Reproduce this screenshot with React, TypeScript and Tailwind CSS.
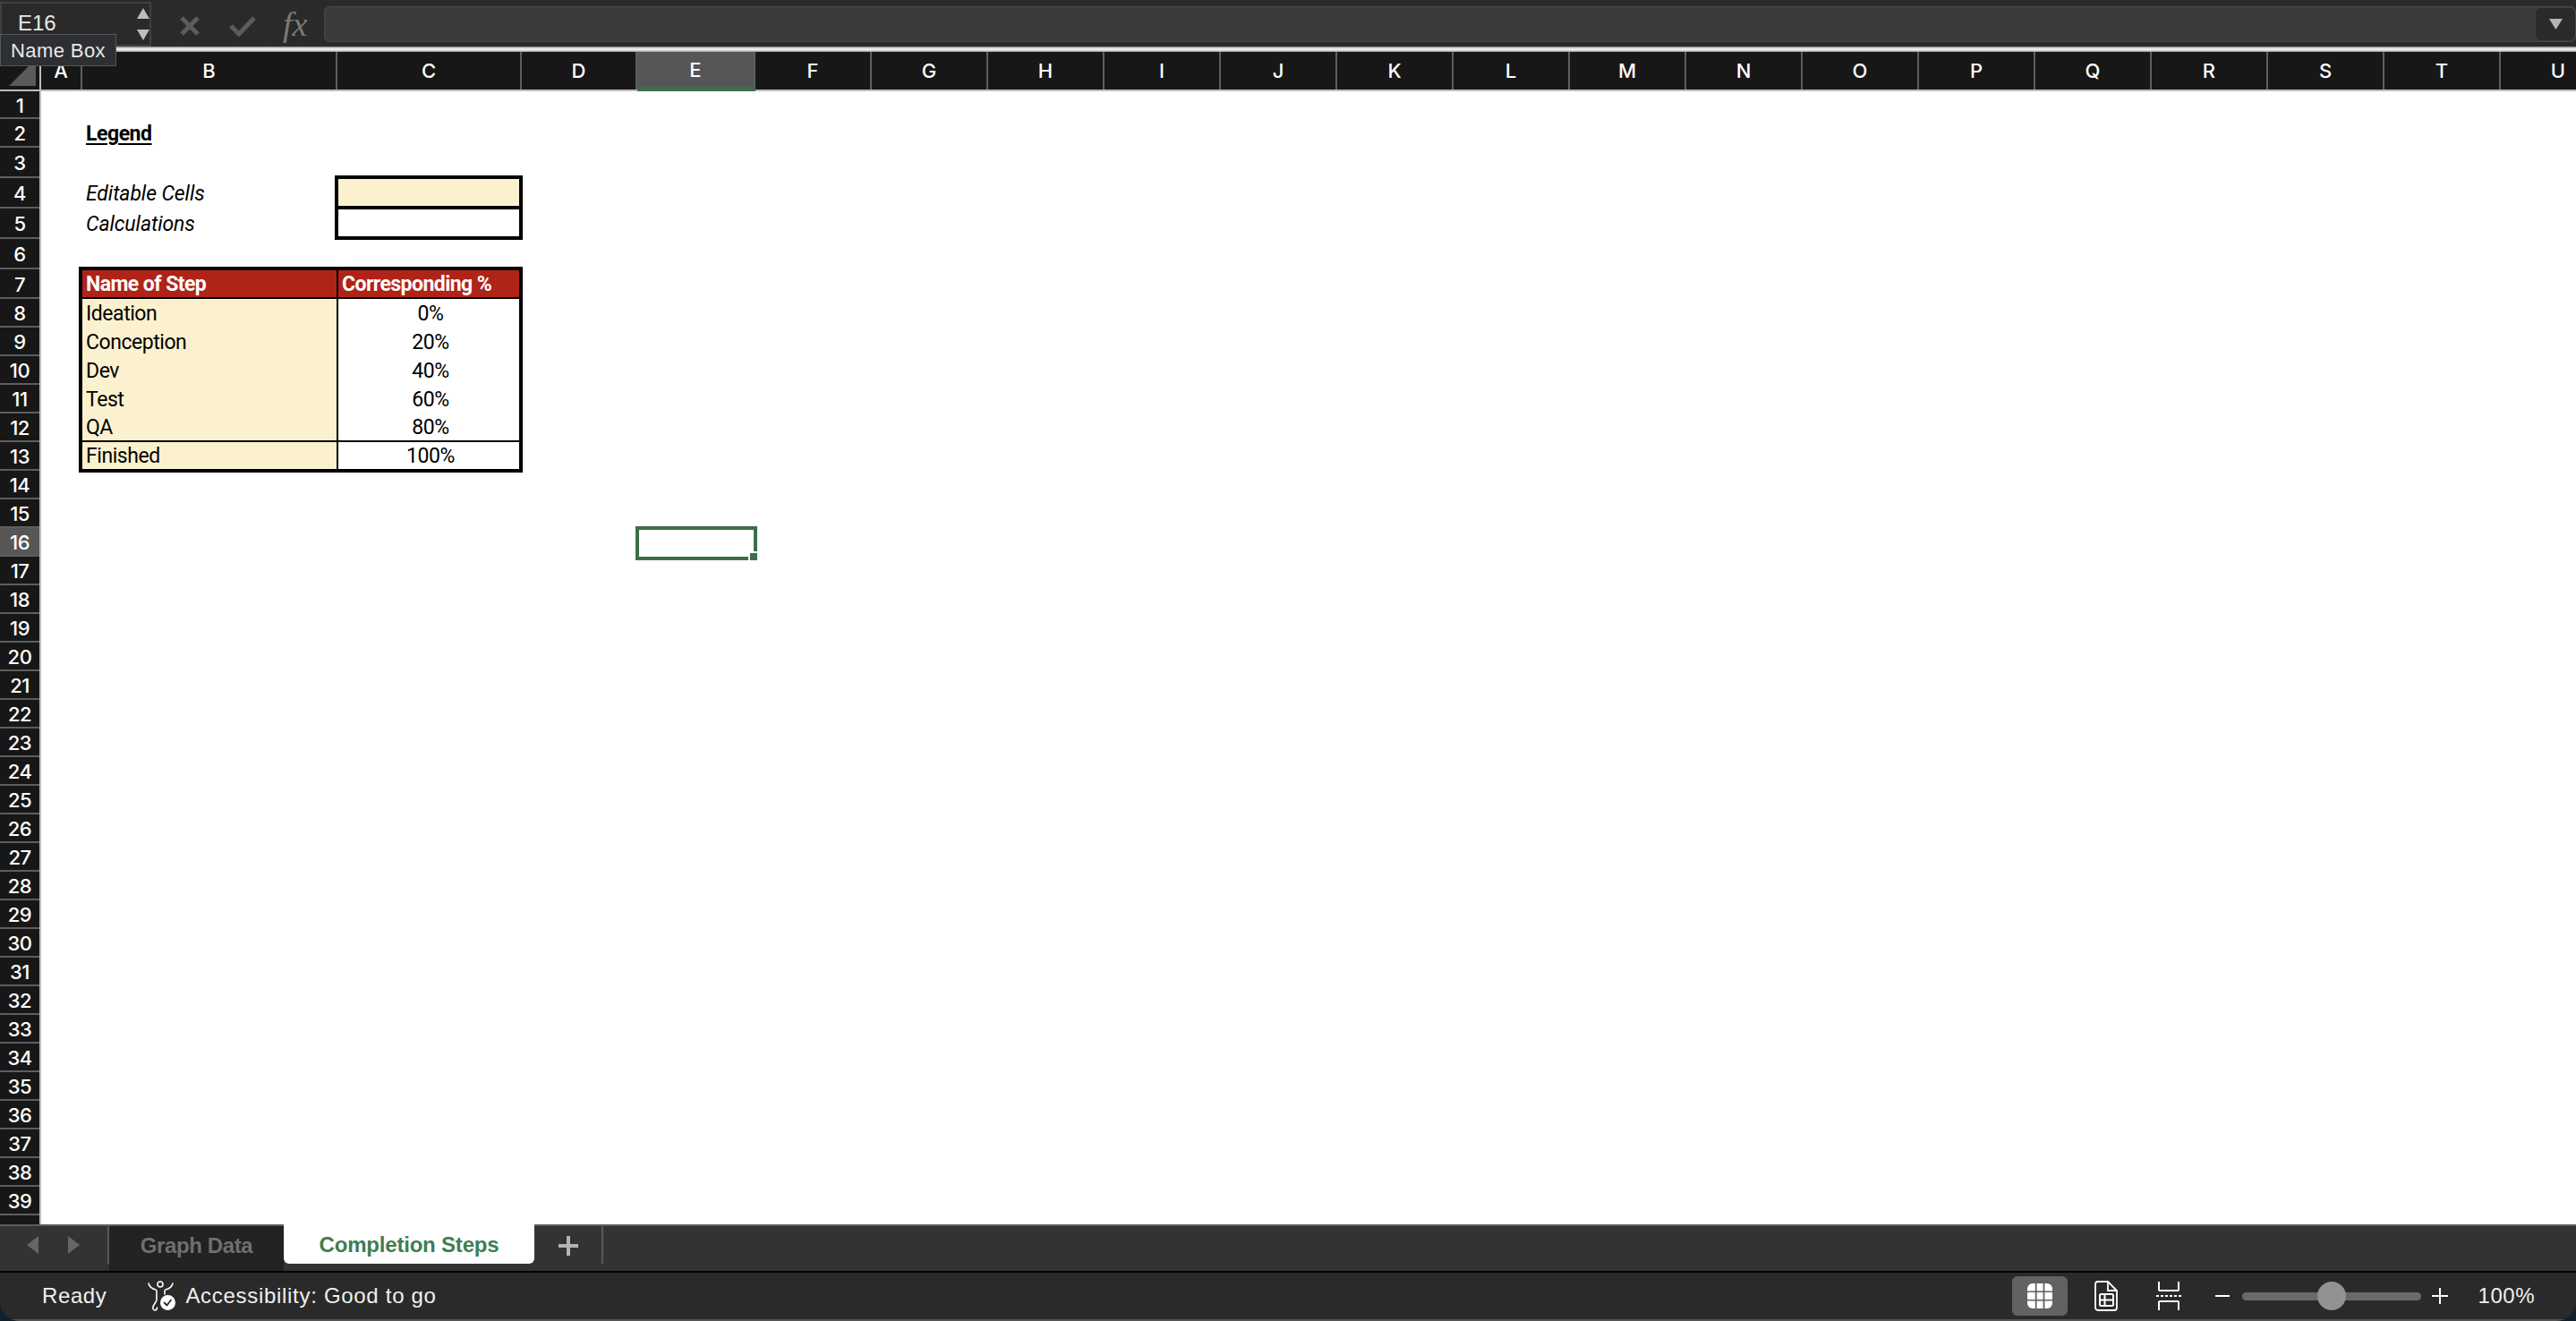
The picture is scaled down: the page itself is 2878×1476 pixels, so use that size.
const columns = [
  { label: "A", box: "w-[46px]" },
  { label: "B", box: "w-[285px]" },
  { label: "C", box: "w-[206px]" },
  { label: "D", box: "w-[129px]" },
  { label: "E", box: "w-[132px] h-[44px] pt-[2px] bg-[#565656] border-b-[5px] border-b-[#3a7048]" },
  { label: "F", box: "w-[130px]" },
  { label: "G", box: "w-[130px]" },
  { label: "H", box: "w-[130px]" },
  { label: "I", box: "w-[130px]" },
  { label: "J", box: "w-[130px]" },
  { label: "K", box: "w-[130px]" },
  { label: "L", box: "w-[130px]" },
  { label: "M", box: "w-[130px]" },
  { label: "N", box: "w-[130px]" },
  { label: "O", box: "w-[130px]" },
  { label: "P", box: "w-[130px]" },
  { label: "Q", box: "w-[130px]" },
  { label: "R", box: "w-[130px]" },
  { label: "S", box: "w-[130px]" },
  { label: "T", box: "w-[130px]" },
  { label: "U", box: "w-[130px]" },
]

const steps = [
  { name: "Ideation", pct: "0%" },
  { name: "Conception", pct: "20%" },
  { name: "Dev", pct: "40%" },
  { name: "Test", pct: "60%" },
  { name: "QA", pct: "80%" },
]

const rowHeight = (n: number) => {
  if (n === 1) return "h-[31px]"
  if (n === 2) return "h-[32px]"
  if (n >= 3 && n <= 6) return "h-[34px]"
  if (n === 7) return "h-[33px]"
  return "h-[32px]"
}

const rows = Array.from({ length: 40 }, (_, i) => i + 1)

const cellFont = "font-['Roboto',sans-serif] text-[23px] tracking-[-0.45px] text-black"
const italicFont = "font-['Roboto',sans-serif] text-[23px] italic tracking-[-0.1px] text-black"

const AccessibilityIcon = () => (
  <svg className="block" width="32" height="34" viewBox="0 0 32 34" fill="none">
    <circle cx="14" cy="4" r="3" stroke="white" strokeWidth="1.6" />
    <path d="M1 3c1 4 4 6 8 7 1 .3 1 1 1 2v9c0 3-3 5-4 8-.6 2 .4 4 2 4s2.500-1.500 2.500-3M28 3c-1 4-4 6-8 7-1 .3-1 1-1 2v3" stroke="white" strokeWidth="1.6" strokeLinecap="round" />
    <circle cx="22.500" cy="24.500" r="8.500" fill="white" />
    <path d="M18.500 24.500l3 3 4.500-6" stroke="#2a2a2a" strokeWidth="1.800" strokeLinecap="round" strokeLinejoin="round" />
  </svg>
)

const GridIcon = () => (
  <svg width="28" height="28" viewBox="0 0 28 28">
    <path d="M6 0h2.8v8.400H0V6a6 6 0 0 1 6-6Z" fill="white" />
    <rect x="10.600" y="0" width="7" height="8.400" fill="white" />
    <path d="M19.400 0H22a6 6 0 0 1 6 6v2.400h-8.600Z" fill="white" />
    <rect x="0" y="10" width="8.800" height="8" fill="white" />
    <rect x="10.600" y="10" width="7" height="8" fill="white" />
    <rect x="19.400" y="10" width="8.600" height="8" fill="white" />
    <path d="M0 19.600h8.800V28H6a6 6 0 0 1-6-6Z" fill="white" />
    <rect x="10.600" y="19.600" width="7" height="8.400" fill="white" />
    <path d="M19.400 19.600H28V22a6 6 0 0 1-6 6h-2.600Z" fill="white" />
  </svg>
)

const PageIcon = () => (
  <svg width="26" height="34" viewBox="0 0 26 34" fill="none" stroke="white" strokeWidth="1.800">
    <path d="M4 1h11l10 10v19a3 3 0 0 1-3 3H4a3 3 0 0 1-3-3V4a3 3 0 0 1 3-3Z" />
    <path d="M15 1v10h10" />
    <rect x="6" y="15" width="15" height="13" rx="1.500" strokeWidth="2" />
    <path d="M6 21.500h15M11.500 15v13" strokeWidth="2" />
  </svg>
)

const PageBreakIcon = () => (
  <svg width="28" height="34" viewBox="0 0 28 34" fill="none" stroke="white" strokeWidth="2">
    <path d="M3 1v9a1 1 0 0 0 1 1h20a1 1 0 0 0 1-1V1" />
    <path d="M0 17h28" strokeDasharray="3 2" />
    <path d="M3 33v-9a1 1 0 0 1 1-1h20a1 1 0 0 1 1 1v9" />
  </svg>
)

const App = () => {
  return (
    <div className="w-[2878px] h-[1476px] overflow-hidden bg-[#10202e]">
      <div className="w-full h-full flex flex-col rounded-b-[22px] overflow-hidden bg-[#2a2a2a]">
        {/* formula bar */}
        <div className="h-[52px] shrink-0 flex items-center bg-[#2a2a2a] relative">
          <div className="w-[169px] h-[50px] mt-[2px] border-2 border-[#404040] flex items-center justify-between pl-[18px] shrink-0">
            <span className="font-['Liberation_Sans',sans-serif] text-[24px] text-[#e8e8e8] -mt-[2px]">E16</span>
            <div className="flex flex-col gap-[12px]">
              <svg width="14" height="12" viewBox="0 0 14 12"><path d="M7 0l7 12H0Z" fill="#bdbdbd" /></svg>
              <svg width="14" height="12" viewBox="0 0 14 12"><path d="M0 0h14L7 12Z" fill="#bdbdbd" /></svg>
            </div>
          </div>
          <svg className="ml-[32px] mt-[6px] shrink-0" width="22" height="22" viewBox="0 0 22 22"><path d="M2 2l18 18M20 2L2 20" stroke="#5c5c5c" strokeWidth="5" /></svg>
          <svg className="ml-[33px] mt-[6px] shrink-0" width="30" height="24" viewBox="0 0 30 24" fill="none"><path d="M2 12l9 9L28 3" stroke="#5c5c5c" strokeWidth="5" /></svg>
          <span className="ml-[30px] w-[46px] shrink-0 mt-[2px] font-['Liberation_Serif',serif] italic text-[38px] leading-none text-[#7a7a7a]">fx</span>
          <div className="flex-1 h-[40px] mt-[2px] rounded-[6px] bg-[#3b3b3b] border border-[#484848] flex justify-end">
            <div className="w-[44px] h-[36px] mt-[1px] rounded-[6px] bg-[#2a2a2a] flex items-center justify-center">
              <svg width="15" height="12" viewBox="0 0 15 12"><path d="M0 0h15L7.500 12Z" fill="#b4b4b4" /></svg>
            </div>
          </div>
          <div className="absolute left-0 top-[38px] z-10 w-[130px] h-[36px] bg-[#2d2f33] border border-[#55575b] flex items-center justify-center font-['Liberation_Sans',sans-serif] text-[22px] tracking-[0.4px] text-[#e8e8e8]">
            Name Box
          </div>
        </div>
        <div className="h-[6px] shrink-0 bg-gradient-to-b from-[#8a8a8a] via-white to-[#9a9a9a]" />

        {/* column headers */}
        <div className="h-[44px] shrink-0 flex bg-[#171717] border-b-2 border-[#bdbdbd]">
          <div className="w-[46px] shrink-0 relative border-r-2 border-[#bdbdbd]">
            <svg className="absolute left-[10px] top-[8px]" width="30" height="30" viewBox="0 0 30 30"><path d="M30 0v30H0Z" fill="#5a5a5a" /></svg>
          </div>
          {columns.map((c) => (
            <div
              key={c.label}
              className={`${c.box} shrink-0 flex items-center justify-center border-r-2 border-r-[#5e5e5e] font-['Inter',sans-serif] font-medium text-[22px] text-white`}
            >
              {c.label}
            </div>
          ))}
        </div>

        {/* sheet */}
        <div className="h-[1266px] shrink-0 flex bg-white overflow-hidden">
          <div className="w-[46px] shrink-0 border-r-2 border-[#bdbdbd] bg-[#171717] overflow-hidden">
            {rows.map((n) => (
              <div
                key={n}
                className={`${rowHeight(n)} pt-[3px] flex items-center justify-center border-b-2 border-[#5e5e5e] font-['Inter',sans-serif] text-[22px] font-medium tracking-[-0.5px] text-white ${n === 16 ? "bg-[#565656]" : ""}`}
              >
                {n < 40 ? n : null}
              </div>
            ))}
          </div>
          <div className="flex-1 relative grid grid-cols-[46px_284px_206px_1fr] grid-rows-[31px_32px_34px_34px_34px_34px_33px_192px_1fr]">
            <div className={`col-start-2 row-start-2 flex items-center pt-[2px] pl-[4px] font-bold underline underline-offset-[3px] decoration-[2px] ${cellFont}`}>Legend</div>
            <div className={`col-start-2 row-start-4 flex items-center pt-[2px] pl-[4px] ${italicFont}`}>Editable Cells</div>
            <div className={`col-start-2 row-start-5 flex items-center pt-[2px] pl-[4px] ${italicFont}`}>Calculations</div>

            <div className="col-start-3 row-start-4 row-span-2 -mx-[2px] -mt-[3px] -mb-[1px] border-4 border-black flex flex-col">
              <div className="flex-1 bg-[#fbf1cf] border-b-4 border-black" />
              <div className="flex-1 bg-white" />
            </div>

            <div className="col-start-2 col-span-2 row-start-7 row-span-2 -ml-[4px] -mr-[2px] -mt-[3px] -mb-[2px] border-4 border-black flex flex-col">
              <div className="h-[32px] pt-[2px] flex border-b-2 border-black bg-[#b02318] font-['Roboto',sans-serif] font-bold text-[23px] tracking-[-0.55px] text-white">
                <div className="w-[286px] -mt-[2px] border-r-2 border-black flex items-center pt-[2px] pl-[4px]">Name of Step</div>
                <div className="flex-1 flex items-center pl-[4px]">Corresponding %</div>
              </div>
              {steps.map((s, i) => (
                <div key={s.name} className={`h-[32px] flex ${cellFont} ${i === 4 ? "border-b-2 border-black" : ""}`}>
                  <div className="w-[286px] border-r-2 border-black bg-[#fbf1cf] flex items-center pt-[2px] pl-[4px]">{s.name}</div>
                  <div className="flex-1 flex items-center justify-center pt-[2px] pl-[4px]">{s.pct}</div>
                </div>
              ))}
              <div className={`h-[30px] flex ${cellFont}`}>
                <div className="w-[286px] border-r-2 border-black bg-[#fbf1cf] flex items-center pt-[2px] pl-[4px]">Finished</div>
                <div className="flex-1 flex items-center justify-center pt-[2px] pl-[4px]">100%</div>
              </div>
            </div>

            <div className="absolute left-[664px] top-[486px] w-[136px] h-[38px] border-4 border-[#3a7048]">
              <div className="absolute -right-[6px] -bottom-[6px] w-[12px] h-[12px] bg-[#3a7048] border-2 border-white" />
            </div>
          </div>
        </div>

        {/* sheet tabs */}
        <div className="h-[52px] shrink-0 flex bg-[#333333] border-t-2 border-[#5c5c5c]">
          <div className="w-[122px] h-[42px] flex items-center pl-[30px] gap-[33px] border-r-2 border-[#585858]">
            <svg width="13" height="20" viewBox="0 0 13 20"><path d="M13 0v20L0 10Z" fill="#666666" /></svg>
            <svg width="13" height="20" viewBox="0 0 13 20"><path d="M0 0v20l13-10Z" fill="#666666" /></svg>
          </div>
          <div className="w-[195px] flex items-center justify-center bg-[#222222] pb-[6px] font-['Liberation_Sans',sans-serif] font-bold text-[24px] tracking-[-0.4px] text-[#6f6f6f]">
            Graph Data
          </div>
          <div className="w-[280px] h-[44px] -mt-[2px] pt-[2px] flex items-center justify-center bg-white rounded-b-[6px] font-['Liberation_Sans',sans-serif] font-bold text-[24px] tracking-[-0.2px] text-[#3f7d52]">
            Completion Steps
          </div>
          <div className="w-[77px] h-[42px] pt-[2px] flex items-center justify-center border-r-2 border-[#585858]">
            <svg width="22" height="22" viewBox="0 0 22 22"><path d="M11 0v22M0 11h22" stroke="#b4b4b4" strokeWidth="4" /></svg>
          </div>
        </div>
        <div className="h-[2px] shrink-0 bg-black" />

        {/* status bar */}
        <div className="h-[54px] shrink-0 flex items-center bg-[#2a2a2a] border-b-2 border-[#555555] font-['Liberation_Sans',sans-serif] text-[24px] text-[#f0f0f0]">
          <span className="ml-[47px] tracking-[0.6px]">Ready</span>
          <span className="ml-[46px]"><AccessibilityIcon /></span>
          <span className="ml-[10px] tracking-[0.7px]">Accessibility: Good to go</span>
          <div className="ml-auto w-[62px] h-[44px] rounded-[6px] bg-[#626262] flex items-center justify-center">
            <GridIcon />
          </div>
          <span className="ml-[30px]"><PageIcon /></span>
          <span className="ml-[43px]"><PageBreakIcon /></span>
          <div className="ml-[38px] w-[16px] h-[2px] bg-white" />
          <div className="ml-[14px] w-[200px] h-[9px] rounded-full bg-[#6a6a6a] flex items-center justify-center">
            <div className="w-[32px] h-[32px] rounded-full bg-[#929292]" />
          </div>
          <svg className="ml-[12px]" width="18" height="18" viewBox="0 0 18 18"><path d="M9 0v18M0 9h18" stroke="white" strokeWidth="2" /></svg>
          <span className="ml-[34px] mr-[46px] tracking-[0.5px]">100%</span>
        </div>
      </div>
    </div>
  )
}

export default App
